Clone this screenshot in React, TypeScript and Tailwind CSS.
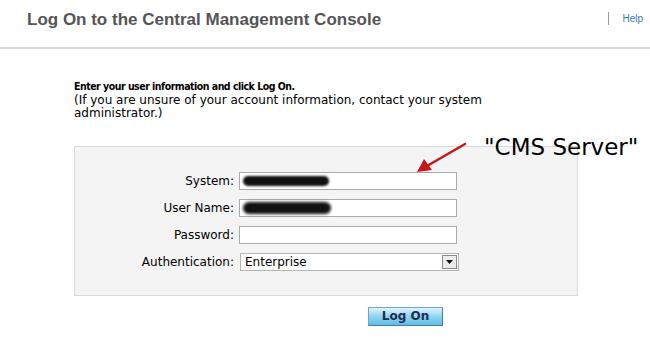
export default function App() {
  return (
    <div className="relative h-[340px] w-[650px] overflow-hidden bg-white font-['DejaVu_Sans',sans-serif] text-[12px] text-black">
      {/* header */}
      <div className="flex h-[49px] items-start justify-between border-b-2 border-[#d6d6d6] pl-[27px] pr-[7px] pt-[7px]">
        <h1 className="font-['Liberation_Sans',Arial,sans-serif] text-[17px] font-bold text-[#555555]">
          Log On to the Central Management Console
        </h1>
        <div className="flex items-center gap-[13px] pt-[4px]">
          <span className="h-[13px] w-px bg-[#9a9a9a]" />
          <a className="font-['Liberation_Sans',Arial,sans-serif] text-[10px] text-[#3a78b0]">Help</a>
        </div>
      </div>

      {/* instructions */}
      <div className="ml-[74px] mt-[31px] leading-[13.5px]">
        <p className="font-['DejaVu_Sans_Condensed','DejaVu_Sans',sans-serif] text-[10.5px] font-bold tracking-[-0.5px]">
          Enter your user information and click Log On.
        </p>
        <p className="w-[440px]">
          (If you are unsure of your account information, contact your system administrator.)
        </p>
      </div>

      {/* form box */}
      <div className="ml-[74px] mt-[25px] h-[150px] w-[504px] border border-[#d9d9d9] bg-[#f4f4f4] pt-[25px]">
        <div className="grid grid-cols-[159px_auto] items-center gap-x-[5px] gap-y-[9px]">
          <label className="text-right">System:</label>
          <div className="relative h-[18px] w-[218px] border border-[#a9a9b4] bg-white">
            <div className="absolute left-[3px] top-[3px] h-[10px] w-[86px] rounded-full bg-[#111] blur-[1px]" />
          </div>
          <label className="text-right">User Name:</label>
          <div className="relative h-[18px] w-[218px] border border-[#a9a9b4] bg-white">
            <div className="absolute left-[3px] top-[2px] h-[12px] w-[88px] rounded-full bg-[#111] blur-[1.5px]" />
          </div>
          <label className="text-right">Password:</label>
          <div className="h-[18px] w-[218px] border border-[#a9a9b4] bg-white" />
          <label className="text-right">Authentication:</label>
          <div className="ml-[1px] flex h-[18px] w-[219px] items-center justify-between border border-[#b5b5b5] bg-white pl-[4px] pr-[1px]">
            <span>Enterprise</span>
            <span className="flex h-[14px] w-[15px] items-center justify-center border border-[#8a8a8a] bg-[#ececec]">
              <svg width="7" height="4" viewBox="0 0 7 4">
                <path d="M0 0h7L3.5 4z" fill="#111" />
              </svg>
            </span>
          </div>
        </div>
      </div>

      {/* log on button */}
      <div className="mt-[11px] flex pl-[368px]">
        <button className="h-[19px] w-[75px] border border-[#6fa8c6] border-b-[#4a7f9e] border-r-[#4a7f9e] bg-gradient-to-b from-[#dff3fc] via-[#8fd4f2] to-[#5cbde8] font-['DejaVu_Sans',sans-serif] text-[12px] font-bold leading-[17px] text-[#1c2c52]">
          Log On
        </button>
      </div>

      {/* annotation */}
      <div className="absolute left-[484px] top-[134px] text-[23px] leading-[26px] text-black">
        "CMS Server"
      </div>
      <svg className="absolute left-[410px] top-[139px]" width="64" height="40" viewBox="0 0 64 40">
        <line x1="55" y1="5" x2="17" y2="27" stroke="#c81414" strokeWidth="2.5" strokeLinecap="round" />
        <path d="M7 33 L14 20 L22 31 Z" fill="#c81414" />
      </svg>
    </div>
  )
}
